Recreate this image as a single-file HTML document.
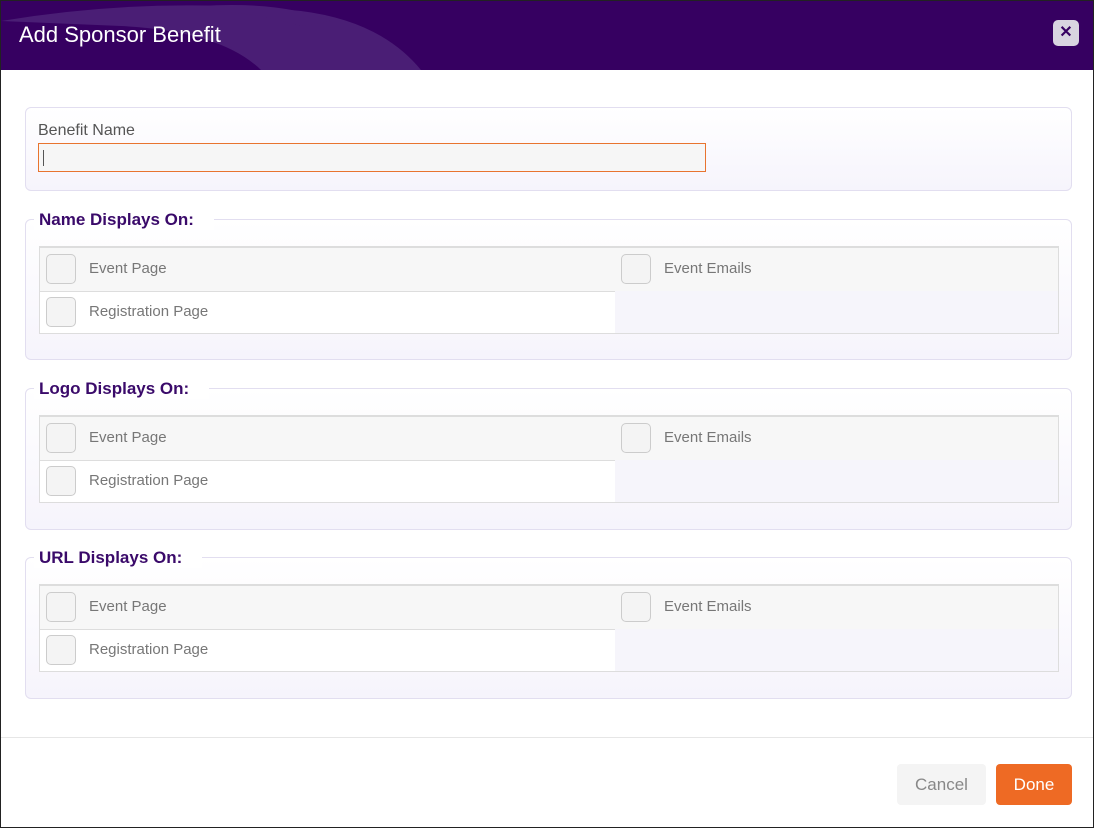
<!DOCTYPE html><html><head><style>
*{box-sizing:border-box}body{margin:0;width:1094px;height:828px;font-family:"Liberation Sans",sans-serif;background:#fff;position:relative;overflow:hidden}
.frame{position:absolute;left:0;top:0;width:1094px;height:828px;border:1px solid #222}
.hdr{position:absolute;left:1px;top:1px;width:1092px;height:69px;background:#360061;overflow:hidden}
.hdr h1{position:absolute;left:18px;top:21px;margin:0;font-size:22px;font-weight:normal;color:#fff}
.x{position:absolute;left:1052px;top:19px;width:26px;height:26px;background:#d8d4e0;border-radius:5px;color:#360061;font-weight:bold;font-size:16px;text-align:center;line-height:26px}
.box{position:absolute;left:25px;width:1047px;border:1px solid #e2def0;border-radius:6px;background:linear-gradient(#fff,#f6f4fc)}
.lbl{position:absolute;left:12px;font-size:16px;color:#555}
.inp{position:absolute;left:12px;top:35px;width:668px;height:29px;border:1px solid #e8742f;background:#f6f6f6}
.leg{position:absolute;left:8px;top:-10px;background:#fff;padding:0 20px 0 5px;font-weight:bold;color:#3a0a6a;font-size:17px}
.tbl{position:absolute;left:13px;top:26px;width:1020px;height:88px;border:1px solid #ddd;border-top:2px solid #ddd;overflow:hidden}
.r{position:absolute;font-size:15px;color:#777}
.cb{position:absolute;left:6px;top:6px;width:30px;height:30px;border:1px solid #ccc;border-radius:5px;background:#f4f4f4}
.r span{position:absolute;left:49px;top:12px}
.btn{position:absolute;top:764px;height:41px;border-radius:4px;font-size:17px;text-align:center;line-height:41px}
</style></head><body>
<div class="hdr"><svg width="1092" height="69" style="position:absolute;left:0;top:0"><path d="M0 20 Q150 -5 300 10 Q380 20 420 69 L260 69 Q220 30 120 25 Z" fill="#4a1e75"/><path d="M200 5 Q280 0 330 20 L300 25 Q250 10 200 10Z" fill="#4a1e75"/></svg><h1>Add Sponsor Benefit</h1><div class="x">✕</div></div>
<div class="box" style="top:107px;height:84px"><div class="lbl" style="top:14px">Benefit Name</div><div class="inp"><div style="position:absolute;left:4px;top:6px;width:1px;height:16px;background:#555"></div></div></div>
<div class="box" style="top:219px;height:141px"><div class="leg">Name Displays On:</div><div class="tbl">
<div class="r" style="left:0;top:0;width:1018px;height:43px;background:#f7f7f7"><div class="cb"></div><span>Event Page</span></div>
<div class="r" style="left:575px;top:0;width:443px;height:43px;background:#f7f7f7"><div class="cb"></div><span>Event Emails</span></div>
<div class="r" style="left:575px;top:43px;width:443px;height:42px;background:#f6f5fb"></div>
<div class="r" style="left:0;top:43px;width:575px;height:42px;background:#fff;border-top:1px solid #ddd"><div class="cb" style="top:5px"></div><span style="top:11px">Registration Page</span></div></div></div>
<div class="box" style="top:388px;height:142px"><div class="leg">Logo Displays On:</div><div class="tbl">
<div class="r" style="left:0;top:0;width:1018px;height:43px;background:#f7f7f7"><div class="cb"></div><span>Event Page</span></div>
<div class="r" style="left:575px;top:0;width:443px;height:43px;background:#f7f7f7"><div class="cb"></div><span>Event Emails</span></div>
<div class="r" style="left:575px;top:43px;width:443px;height:42px;background:#f6f5fb"></div>
<div class="r" style="left:0;top:43px;width:575px;height:42px;background:#fff;border-top:1px solid #ddd"><div class="cb" style="top:5px"></div><span style="top:11px">Registration Page</span></div></div></div>
<div class="box" style="top:557px;height:142px"><div class="leg">URL Displays On:</div><div class="tbl">
<div class="r" style="left:0;top:0;width:1018px;height:43px;background:#f7f7f7"><div class="cb"></div><span>Event Page</span></div>
<div class="r" style="left:575px;top:0;width:443px;height:43px;background:#f7f7f7"><div class="cb"></div><span>Event Emails</span></div>
<div class="r" style="left:575px;top:43px;width:443px;height:42px;background:#f6f5fb"></div>
<div class="r" style="left:0;top:43px;width:575px;height:42px;background:#fff;border-top:1px solid #ddd"><div class="cb" style="top:5px"></div><span style="top:11px">Registration Page</span></div></div></div>
<div style="position:absolute;left:1px;top:737px;width:1092px;height:1px;background:#e6e6e6"></div>
<div class="btn" style="left:897px;width:89px;background:#f4f4f4;color:#888">Cancel</div>
<div class="btn" style="left:996px;width:76px;background:#ee6a24;color:#fff">Done</div>
<div class="frame"></div>
</body></html>
